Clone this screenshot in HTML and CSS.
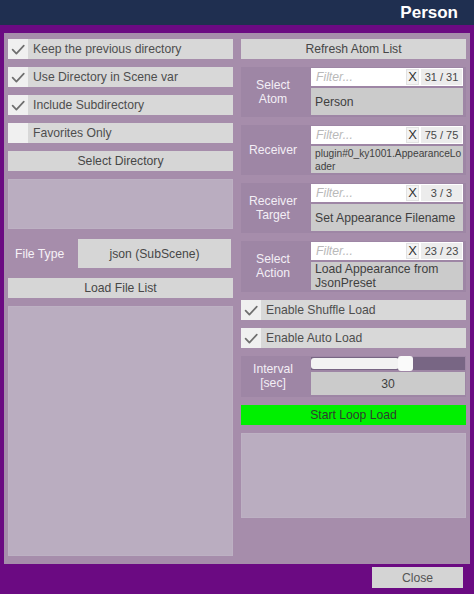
FILE: index.html
```html
<!DOCTYPE html>
<html lang="en">
<head>
<meta charset="utf-8">
<title>Person</title>
<link rel="stylesheet" href="styles.css">
</head>
<body>
<div class="window">
  <header class="titlebar"><span class="title">Person</span></header>
  <div class="frame">
    <main class="panel">
      <section class="col">
        <div class="toggle">
          <span class="box"><svg class="check" viewBox="0 0 20 20"><path d="M4.6 10.6 L8.4 14.6 L15.8 6.6"/></svg></span>
          <span class="toggle-label">Keep the previous directory</span>
        </div>
        <div class="toggle">
          <span class="box"><svg class="check" viewBox="0 0 20 20"><path d="M4.6 10.6 L8.4 14.6 L15.8 6.6"/></svg></span>
          <span class="toggle-label">Use Directory in Scene var</span>
        </div>
        <div class="toggle">
          <span class="box"><svg class="check" viewBox="0 0 20 20"><path d="M4.6 10.6 L8.4 14.6 L15.8 6.6"/></svg></span>
          <span class="toggle-label">Include Subdirectory</span>
        </div>
        <div class="toggle">
          <span class="box"></span>
          <span class="toggle-label">Favorites Only</span>
        </div>
        <button class="btn">Select Directory</button>
        <div class="well well-short"></div>
        <div class="field-row">
          <span class="field-label">File Type</span>
          <button class="btn choice">json (SubScene)</button>
        </div>
        <button class="btn">Load File List</button>
        <div class="well well-grow"></div>
      </section>

      <section class="col">
        <button class="btn">Refresh Atom List</button>

        <div class="picker">
          <div class="picker-label">Select Atom</div>
          <div class="picker-body">
            <div class="filter"><span class="placeholder">Filter...</span><span class="clear">X</span><span class="count">31 / 31</span></div>
            <div class="value">Person</div>
          </div>
        </div>

        <div class="picker">
          <div class="picker-label">Receiver</div>
          <div class="picker-body">
            <div class="filter"><span class="placeholder">Filter...</span><span class="clear">X</span><span class="count">75 / 75</span></div>
            <div class="value value-small">plugin#0_ky1001.AppearanceLoader</div>
          </div>
        </div>

        <div class="picker">
          <div class="picker-label">Receiver Target</div>
          <div class="picker-body">
            <div class="filter"><span class="placeholder">Filter...</span><span class="clear">X</span><span class="count">3 / 3</span></div>
            <div class="value">Set Appearance Filename</div>
          </div>
        </div>

        <div class="picker picker-tall">
          <div class="picker-label">Select Action</div>
          <div class="picker-body">
            <div class="filter"><span class="placeholder">Filter...</span><span class="clear">X</span><span class="count">23 / 23</span></div>
            <div class="value value-wrap">Load Appearance from JsonPreset</div>
          </div>
        </div>

        <div class="toggle">
          <span class="box"><svg class="check" viewBox="0 0 20 20"><path d="M4.6 10.6 L8.4 14.6 L15.8 6.6"/></svg></span>
          <span class="toggle-label">Enable Shuffle Load</span>
        </div>
        <div class="toggle">
          <span class="box"><svg class="check" viewBox="0 0 20 20"><path d="M4.6 10.6 L8.4 14.6 L15.8 6.6"/></svg></span>
          <span class="toggle-label">Enable Auto Load</span>
        </div>

        <div class="picker picker-slider">
          <div class="picker-label">Interval [sec]</div>
          <div class="picker-body">
            <div class="slider">
              <div class="slider-fill" style="width: 88px"></div>
              <div class="slider-thumb" style="left: 87px"></div>
            </div>
            <div class="value value-center">30</div>
          </div>
        </div>

        <button class="btn btn-go">Start Loop Load</button>
        <div class="well well-log"></div>
      </section>
    </main>
    <footer class="footer">
      <button class="btn btn-close">Close</button>
    </footer>
  </div>
</div>
</body>
</html>
```

FILE: styles.css
```css
* { box-sizing: border-box; }

html, body {
  margin: 0;
  padding: 0;
}

body {
  width: 474px;
  height: 594px;
  overflow: hidden;
  background: #6b0a82;
  font-family: "Liberation Sans", Arial, sans-serif;
  font-size: 12.2px;
  color: #474747;
}

.window {
  display: flex;
  flex-direction: column;
  height: 594px;
}

.titlebar {
  height: 25px;
  flex: none;
  background: #1f2f50;
  display: flex;
  align-items: center;
  justify-content: flex-end;
  padding-right: 16px;
}

.title {
  color: #ffffff;
  font-weight: bold;
  font-size: 17px;
}

.frame {
  flex: 1;
  display: flex;
  flex-direction: column;
  background: #6b0a82;
  padding: 8px 4px 0 4px;
}

.panel {
  height: 531px;
  flex: none;
  background: #a68dab;
  display: flex;
  gap: 8px;
  padding: 6px 4px 8px 4px;
}

.col {
  width: 225px;
  display: flex;
  flex-direction: column;
  gap: 8px;
}

.btn {
  height: 20px;
  flex: none;
  border: 0;
  border-radius: 0;
  margin: 0;
  padding: 0;
  background: #d6d6d6;
  color: #474747;
  font: inherit;
  display: flex;
  align-items: center;
  justify-content: center;
}

.toggle {
  height: 20px;
  flex: none;
  display: flex;
}

.box {
  width: 20px;
  height: 20px;
  background: #f0f0f0;
  display: block;
}

.check {
  width: 20px;
  height: 20px;
  display: block;
  fill: none;
  stroke: #6f6f6f;
  stroke-width: 1.7;
  stroke-linecap: round;
  stroke-linejoin: round;
}

.toggle-label {
  flex: 1;
  background: #d8d8d8;
  color: #4e4e4e;
  padding-left: 5px;
  line-height: 20px;
}

.well {
  background: #baadc0;
  border: 1px solid #bdb1c3;
}

.well-short { height: 50px; flex: none; }
.well-grow { flex: 1; }
.well-log { height: 85px; flex: none; }

.field-row {
  height: 33px;
  flex: none;
  display: flex;
  align-items: center;
}

.field-label {
  width: 70px;
  padding-left: 7px;
  color: #f6f2f7;
}

.choice {
  width: 153px;
  height: 29px;
}

.picker {
  height: 50px;
  flex: none;
  display: flex;
  background: #9e86a5;
  padding: 1px 3px 2px 0;
}

.picker-tall { height: 51px; }

.picker-label {
  width: 64px;
  flex: none;
  padding: 0 5px;
  display: flex;
  align-items: center;
  justify-content: center;
  text-align: center;
  line-height: 14px;
  color: #f3eef5;
}

.picker-body {
  flex: 1;
  margin-left: 6px;
  display: flex;
  flex-direction: column;
  gap: 2px;
  min-width: 0;
}

.filter {
  height: 18px;
  flex: none;
  background: #ffffff;
  display: flex;
  align-items: center;
  padding: 1px 1px 1px 5px;
}

.placeholder {
  flex: 1;
  color: #b9b9b9;
  font-style: italic;
}

.clear {
  width: 13px;
  height: 16px;
  background: #f3f3f3;
  border: 1px solid #e2e2e2;
  color: #333333;
  font-size: 13px;
  line-height: 14px;
  text-align: center;
}

.count {
  width: 41px;
  height: 16px;
  margin-left: 2px;
  background: #ececec;
  color: #474747;
  font-size: 11px;
  line-height: 16px;
  text-align: center;
}

.value {
  flex: 1;
  background: #cbcbcb;
  color: #3f3f3f;
  padding: 0 4px;
  display: flex;
  align-items: center;
  line-height: 14px;
}

.value-small {
  font-size: 10.2px;
  line-height: 13px;
  padding: 0 0 0 4px;
  word-break: break-all;
}

.value-center {
  justify-content: center;
}

.picker-slider {
  height: 41px;
  padding-right: 1px;
}

.slider {
  position: relative;
  height: 13px;
  flex: none;
  background: #786684;
  padding: 1px 0;
}

.slider-fill {
  height: 11px;
  background: #f3f3f3;
  border-radius: 3px;
}

.slider-thumb {
  position: absolute;
  top: -1px;
  width: 15px;
  height: 15px;
  background: #fafafa;
  border-radius: 3px;
}

.btn-go {
  background: #00f000;
  color: #2f3d2f;
}

.footer {
  flex: 1;
  display: flex;
  justify-content: flex-end;
  align-items: flex-start;
  padding: 3px 7px 0 0;
}

.btn-close {
  width: 91px;
  height: 21px;
  background: #d4d4d4;
  color: #555555;
}
```
